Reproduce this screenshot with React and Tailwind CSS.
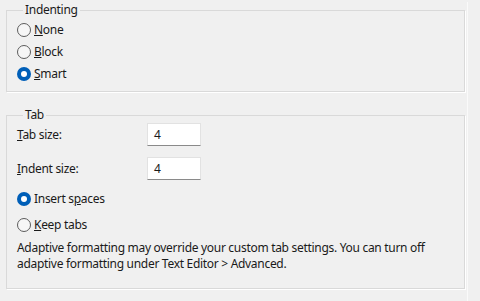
import React from 'react';

const Radio = ({ checked, children }) => (
  <div className="flex h-[22px] items-center gap-[3px]">
    {checked ? (
      <span className="flex h-[14px] w-[14px] items-center justify-center rounded-full bg-[#005fb8]">
        <span className="h-[6px] w-[6px] rounded-full bg-white" />
      </span>
    ) : (
      <span className="h-[14px] w-[14px] rounded-full border border-[#5c5c5c] bg-[#f6f6f6]" />
    )}
    <span>{children}</span>
  </div>
);

const NumberBox = ({ value }) => (
  <div className="flex h-[23px] w-[54px] items-center border border-[#e2e2e2] border-b-[#8a8a8a] bg-white pl-[6px]">
    {value}
  </div>
);

const GroupBox = ({ title, className = '', children }) => (
  <fieldset className={`ml-[6px] w-[459px] border border-[#d9d9d9] shadow-[1px_1px_0_#ffffff] ${className}`}>
    <legend className="ml-[6px] px-[2px] leading-4">{title}</legend>
    {children}
  </fieldset>
);

export default function App() {
  return (
    <div
      className="h-[301px] w-[480px] bg-[#f0f0f0] pt-[2px] text-[12px] tracking-[-0.3px] text-[#1a1a1a]"
      style={{ fontFamily: '"Segoe UI", "Noto Sans", sans-serif' }}
    >
      <div className="h-full w-[468px] border-r border-[#fafafa]">
        <GroupBox title="Indenting" className="px-[10px] pt-[1px] pb-[6px]">
          <Radio><u>N</u>one</Radio>
          <Radio><u>B</u>lock</Radio>
          <Radio checked><u>S</u>mart</Radio>
        </GroupBox>

        <GroupBox title="Tab" className="mt-[15px] px-[10px] pb-[16px]">
          <div className="flex items-center">
            <span className="w-[130px]"><u>T</u>ab size:</span>
            <NumberBox value="4" />
          </div>
          <div className="mt-[11px] flex items-center">
            <span className="w-[130px]"><u>I</u>ndent size:</span>
            <NumberBox value="4" />
          </div>
          <div className="mt-[8px]">
            <Radio checked>Insert s<u>p</u>aces</Radio>
          </div>
          <div className="mt-[4px]">
            <Radio><u>K</u>eep tabs</Radio>
          </div>
          <p className="mt-[4px] leading-4">
            Adaptive formatting may override your custom tab settings. You can turn off
            <br />
            adaptive formatting under Text Editor &gt; Advanced.
          </p>
        </GroupBox>
      </div>
    </div>
  );
}
